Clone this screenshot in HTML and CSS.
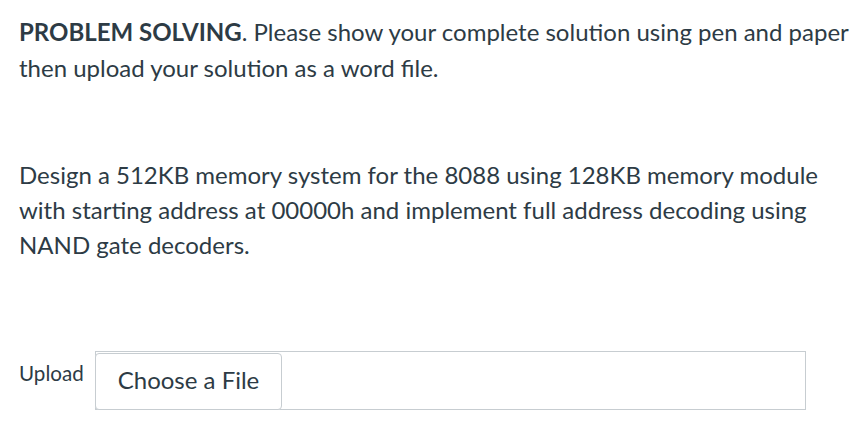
FILE: index.html
```html
<!DOCTYPE html>
<html>
<head>
<meta charset="utf-8">
<link rel="stylesheet" href="styles.css">
</head>
<body>
<div class="question">
  <p class="para first"><strong>PROBLEM SOLVING</strong>. Please show your complete solution using pen and paper then upload your solution as a word file.</p>
  <p class="para second">Design a 512KB memory system for the 8088 using 128KB memory module with starting address at 00000h and implement full address decoding using NAND gate decoders.</p>
  <div class="upload-row">
    <span class="upload-label">Upload</span>
    <div class="file-box">
      <button class="file-btn" type="button">Choose a File</button>
    </div>
  </div>
</div>
</body>
</html>
```
FILE: styles.css
```css
html, body {
  margin: 0;
  padding: 0;
  background: #ffffff;
}
body {
  font-family: Lato, "Open Sans", sans-serif;
  color: #2d3b45;
}
.question {
  padding: 14px 0 0 19px;
  width: 836px;
}
.para {
  margin: 0;
  font-size: 24px;
  line-height: 36px;
}
.para strong {
  font-weight: 700;
}
.second {
  margin-top: 71px;
  line-height: 35px;
}
.upload-row {
  margin-top: 89px;
  display: flex;
  align-items: flex-start;
}
.upload-label {
  font-size: 20.6px;
  line-height: 24px;
  margin-top: 10px;
  width: 76px;
}
.file-box {
  width: 709px;
  height: 57px;
  border: 1px solid #c7cdd1;
  background: #fff;
  position: relative;
}
.file-btn {
  position: absolute;
  left: -1px;
  top: 1px;
  width: 187px;
  height: 57px;
  border: 1px solid #c7cdd1;
  border-radius: 4px;
  background: #fff;
  font-family: Lato, "Open Sans", sans-serif;
  font-size: 24px;
  color: #2d3b45;
  padding: 0 0 4px 0;
  text-align: center;
}
```
